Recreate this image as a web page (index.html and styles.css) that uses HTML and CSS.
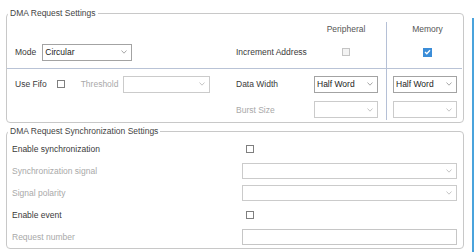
FILE: index.html
```html
<!DOCTYPE html>
<html>
<head>
<title>DMA Request</title>
<meta http-equiv="Content-Type" content="text/html; charset=utf-8" />
<link rel="stylesheet" href="styles.css">
</head>
<body>
<div class="page">
	<div class="main">
		<fieldset class="group dma">
			<legend>DMA Request Settings</legend>
			<div class="grid">
				<div class="cell left"></div>
				<div class="cell lbl"></div>
				<div class="cell per mid head">Peripheral</div>
				<div class="cell mem mid head">Memory</div>

				<div class="cell left">
					<span class="lab">Mode</span>
					<div class="sel mode"><span>Circular</span><svg width="6" height="4" viewBox="0 0 6 4"><path d="M0.5 0.5 L3 3.2 L5.5 0.5" /></svg></div>
				</div>
				<div class="cell lbl">Increment Address</div>
				<div class="cell per mid"><span class="chk off"></span></div>
				<div class="cell mem mid"><span class="chk on"><svg width="7" height="6" viewBox="0 0 7 6"><path d="M1 3 L2.8 4.8 L6 1.2" /></svg></span></div>

				<div class="cell left sep">
					<span class="lab">Use Fifo</span>
					<span class="chk fifo"></span>
					<span class="lab dim thr">Threshold</span>
					<div class="sel dis thsel"><span></span><svg width="6" height="4" viewBox="0 0 6 4"><path d="M0.5 0.5 L3 3.2 L5.5 0.5" /></svg></div>
				</div>
				<div class="cell lbl sep">Data Width</div>
				<div class="cell per sep"><div class="sel half"><span>Half Word</span><svg width="6" height="4" viewBox="0 0 6 4"><path d="M0.5 0.5 L3 3.2 L5.5 0.5" /></svg></div></div>
				<div class="cell mem sep"><div class="sel half"><span>Half Word</span><svg width="6" height="4" viewBox="0 0 6 4"><path d="M0.5 0.5 L3 3.2 L5.5 0.5" /></svg></div></div>

				<div class="cell left"></div>
				<div class="cell lbl dim">Burst Size</div>
				<div class="cell per"><div class="sel dis half"><span></span><svg width="6" height="4" viewBox="0 0 6 4"><path d="M0.5 0.5 L3 3.2 L5.5 0.5" /></svg></div></div>
				<div class="cell mem"><div class="sel dis half"><span></span><svg width="6" height="4" viewBox="0 0 6 4"><path d="M0.5 0.5 L3 3.2 L5.5 0.5" /></svg></div></div>
			</div>
		</fieldset>

		<fieldset class="group sync">
			<legend>DMA Request Synchronization Settings</legend>
			<div class="rows">
				<div class="cell name">Enable synchronization</div>
				<div class="cell ctl"><span class="chk box"></span></div>

				<div class="cell name dim">Synchronization signal</div>
				<div class="cell ctl"><div class="sel dis wide"><span></span><svg width="6" height="4" viewBox="0 0 6 4"><path d="M0.5 0.5 L3 3.2 L5.5 0.5" /></svg></div></div>

				<div class="cell name dim">Signal polarity</div>
				<div class="cell ctl"><div class="sel dis wide"><span></span><svg width="6" height="4" viewBox="0 0 6 4"><path d="M0.5 0.5 L3 3.2 L5.5 0.5" /></svg></div></div>

				<div class="cell name">Enable event</div>
				<div class="cell ctl"><span class="chk box"></span></div>

				<div class="cell name dim">Request number</div>
				<div class="cell ctl"><div class="field wide"></div></div>
			</div>
		</fieldset>
	</div>
	<div class="edge"></div>
</div>
</body>
</html>
```

FILE: styles.css
```css
* {box-sizing:border-box;}
body {margin:0;background:#fff;font-family:"Liberation Sans", Arial, sans-serif;font-size:8.5px;color:#3a3a3a;}
.page {display:flex;width:474px;height:252px;}
.main {width:472px;padding-left:6px;}
.edge {width:2px;margin-top:18px;background:#4aa3dc;}

.group {margin:0;width:458px;min-width:0;border:1px solid #c8c8c8;border-radius:4px;padding:0;}
.group legend {margin-left:1px;padding:0 2px;line-height:10px;font-size:8.5px;color:#444;}
.dma {margin-top:8px;padding-top:4px;padding-bottom:2px;}
.sync {margin-top:3px;padding-top:2px;}

.grid {display:grid;grid-template-columns:223px 80px 76px 76px;grid-template-rows:14px 32px 31px 21px;}
.rows {display:grid;grid-template-columns:235px 220px;grid-auto-rows:22px;}

.cell {display:flex;align-items:center;}
.left {padding-left:8px;}
.lbl {padding-left:6px;}
.per {padding-left:4px;}
.mem {padding-left:6px;border-left:1px solid #b5c0d6;}
.mid {justify-content:center;}
.per.mid {padding:0 4px 0 0;}
.sep {border-top:1px solid #b9c3d6;}
.head {color:#555;}
.dim {color:#a9a9a9;}
.name {padding-left:5px;}

.lab {white-space:nowrap;}
.thr {margin-left:16px;}
.fifo {margin-left:10px;}

.sel {display:flex;align-items:center;justify-content:space-between;height:17px;border:1px solid #a3a3a3;background:#fff;padding:0 4px 0 2px;color:#222;}
.sel svg path {fill:none;stroke:#a8a8a8;stroke-width:1;}
.sel.dis {border-color:#cbcbcb;}
.sel.dis svg path {stroke:#c6c6c6;}
.mode {width:90px;margin-left:6px;}
.thsel {width:87px;margin-left:5px;}
.half {width:64px;}
.wide {width:215px;height:16px;}
.field {height:16px;border:1px solid #c6c6c6;background:#fff;}

.chk {display:block;width:8px;height:8px;border:1px solid #7f7f7f;background:#fff;}
.chk.off {border-color:#c4c4c4;background:#f3f3f3;}
.chk.on {display:flex;align-items:center;justify-content:center;width:9px;height:9px;border-color:#3b8dd8;background:#3b8dd8;}
.chk.on svg path {fill:none;stroke:#fff;stroke-width:1.3;}
.box {margin-left:4px;}
```
